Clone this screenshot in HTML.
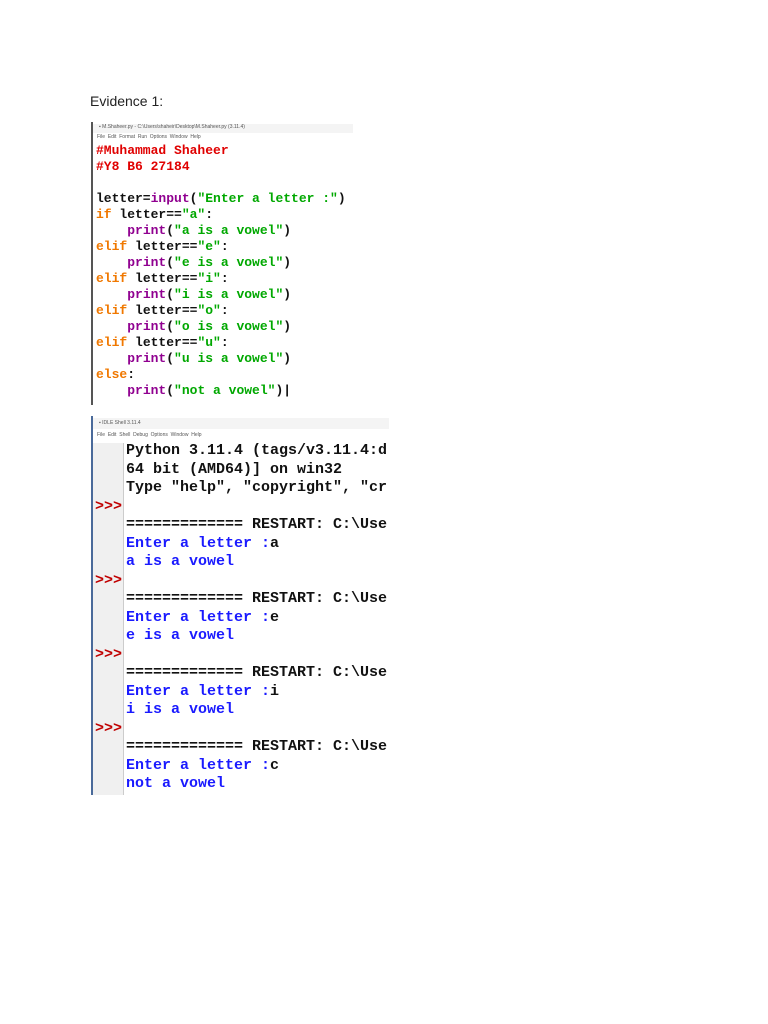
<!DOCTYPE html>
<html><head><style>
body{margin:0;width:768px;height:1024px;background:#fff;position:relative;overflow:hidden}
.t{position:absolute;left:90px;top:93px;font:14px "Liberation Sans",sans-serif;color:#222}
.win{position:absolute;background:#fff;overflow:hidden}
.tb{position:absolute;left:0;right:0;font:5px "Liberation Sans",sans-serif;color:#555;white-space:nowrap}
pre{position:absolute;margin:0;font-family:"Liberation Mono",monospace;font-weight:bold;white-space:pre}
.k{color:#f07800}.s{color:#00a800}.b{color:#900090}.r{color:#e00000}.bl{color:#1a1aff}.p{color:#c00000}
</style></head><body>
<div class="t">Evidence 1:</div>
<div class="win" style="left:91px;top:122px;width:260px;height:283px;border-left:2px solid #555">
 <div class="tb" style="top:2px;height:9px;background:#f4f4f4;padding-left:6px">&#9642; M.Shaheer.py - C:\Users\shaheir\Desktop\M.Shaheer.py (3.11.4)</div>
 <div class="tb" style="top:12px;height:9px;padding-left:4px">File &nbsp;Edit &nbsp;Format &nbsp;Run &nbsp;Options &nbsp;Window &nbsp;Help</div>
 <pre style="left:3px;top:21px;font-size:13px;line-height:16px;color:#111"><span class="r">#Muhammad Shaheer
#Y8 B6 27184</span>

letter=<span class="b">input</span>(<span class="s">"Enter a letter :"</span>)
<span class="k">if</span> letter==<span class="s">"a"</span>:
    <span class="b">print</span>(<span class="s">"a is a vowel"</span>)
<span class="k">elif</span> letter==<span class="s">"e"</span>:
    <span class="b">print</span>(<span class="s">"e is a vowel"</span>)
<span class="k">elif</span> letter==<span class="s">"i"</span>:
    <span class="b">print</span>(<span class="s">"i is a vowel"</span>)
<span class="k">elif</span> letter==<span class="s">"o"</span>:
    <span class="b">print</span>(<span class="s">"o is a vowel"</span>)
<span class="k">elif</span> letter==<span class="s">"u"</span>:
    <span class="b">print</span>(<span class="s">"u is a vowel"</span>)
<span class="k">else</span>:
    <span class="b">print</span>(<span class="s">"not a vowel"</span>)|</pre>
</div>
<div class="win" style="left:91px;top:416px;width:296px;height:379px;border-left:2px solid #4a6a9a">
 <div class="tb" style="top:2px;height:11px;background:#f4f4f4;padding-left:6px;line-height:11px">&#9642; IDLE Shell 3.11.4</div>
 <div class="tb" style="top:14px;height:11px;padding-left:4px;line-height:11px">File &nbsp;Edit &nbsp;Shell &nbsp;Debug &nbsp;Options &nbsp;Window &nbsp;Help</div>
 <div style="position:absolute;left:0;top:27px;width:30px;bottom:0;background:#f0f0f0;border-right:1px solid #ccc"></div>
 <pre style="left:2px;top:26px;font-size:15px;line-height:18.5px;color:#111"><span style="padding-left:4px">   Python 3.11.4 (tags/v3.11.4:d</span>
<span style="padding-left:4px">   64 bit (AMD64)] on win32</span>
<span style="padding-left:4px">   Type "help", "copyright", "cr</span>
<span class="p">&gt;&gt;&gt;</span>
<span style="padding-left:4px">   ============= RESTART: C:\Use</span>
<span style="padding-left:4px">   <span class="bl">Enter a letter :</span>a</span>
<span style="padding-left:4px">   <span class="bl">a is a vowel</span></span>
<span class="p">&gt;&gt;&gt;</span>
<span style="padding-left:4px">   ============= RESTART: C:\Use</span>
<span style="padding-left:4px">   <span class="bl">Enter a letter :</span>e</span>
<span style="padding-left:4px">   <span class="bl">e is a vowel</span></span>
<span class="p">&gt;&gt;&gt;</span>
<span style="padding-left:4px">   ============= RESTART: C:\Use</span>
<span style="padding-left:4px">   <span class="bl">Enter a letter :</span>i</span>
<span style="padding-left:4px">   <span class="bl">i is a vowel</span></span>
<span class="p">&gt;&gt;&gt;</span>
<span style="padding-left:4px">   ============= RESTART: C:\Use</span>
<span style="padding-left:4px">   <span class="bl">Enter a letter :</span>c</span>
<span style="padding-left:4px">   <span class="bl">not a vowel</span></span></pre>
</div>
</body></html>
